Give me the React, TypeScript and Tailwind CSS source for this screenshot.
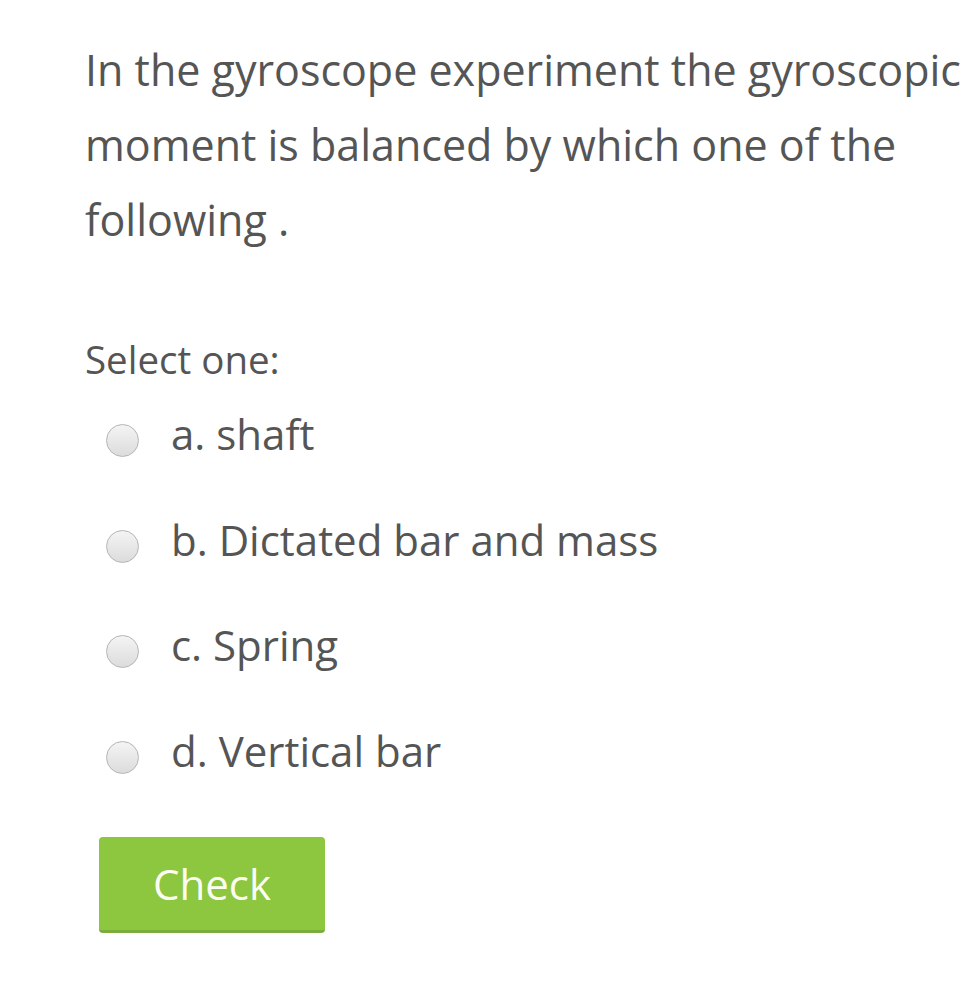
import { useState } from 'react'

const options = [
  { key: 'a', label: 'a. shaft' },
  { key: 'b', label: 'b. Dictated bar and mass' },
  { key: 'c', label: 'c. Spring' },
  { key: 'd', label: 'd. Vertical bar' },
]

const App = () => {
  const [selected, setSelected] = useState<string | null>(null)

  return (
    <div
      className="min-h-screen bg-white text-[#555555]"
      style={{ fontFamily: '"Open Sans", "Liberation Sans", sans-serif' }}
    >
      <div className="pl-[85px] pr-2 pt-[32px]">
        {/* 题目 */}
        <p className="text-[43px] leading-[75px]">
          In the gyroscope experiment the gyroscopic moment is balanced by which one of the following .
        </p>

        <div className="mt-[77px] text-[38.5px] leading-[50px]">Select one:</div>

        {/* 选项 */}
        <div className="mt-[22px] flex flex-col">
          {options.map((opt) => (
            <label
              key={opt.key}
              className="flex h-[105.7px] items-start cursor-pointer"
              onClick={() => setSelected(opt.key)}
            >
              <span
                className={`ml-[21px] mt-[18px] h-[33px] w-[33px] shrink-0 rounded-full border border-[#b5b5b5] bg-gradient-to-b from-[#f4f4f4] to-[#dcdcdc] ${
                  selected === opt.key ? 'ring-4 ring-inset ring-[#8bc34a]' : ''
                }`}
              />
              <span className="ml-[32px] text-[42px] leading-[56px]">{opt.label}</span>
            </label>
          ))}
        </div>

        {/* 按钮 */}
        <button className="ml-[14px] mt-[8px] h-[96px] w-[226px] rounded-[4px] border-b-[3px] border-[#7aad3c] bg-[#8dc63f] text-[42px] text-[#fbfdf2]">
          Check
        </button>
      </div>
    </div>
  )
}

export default App
